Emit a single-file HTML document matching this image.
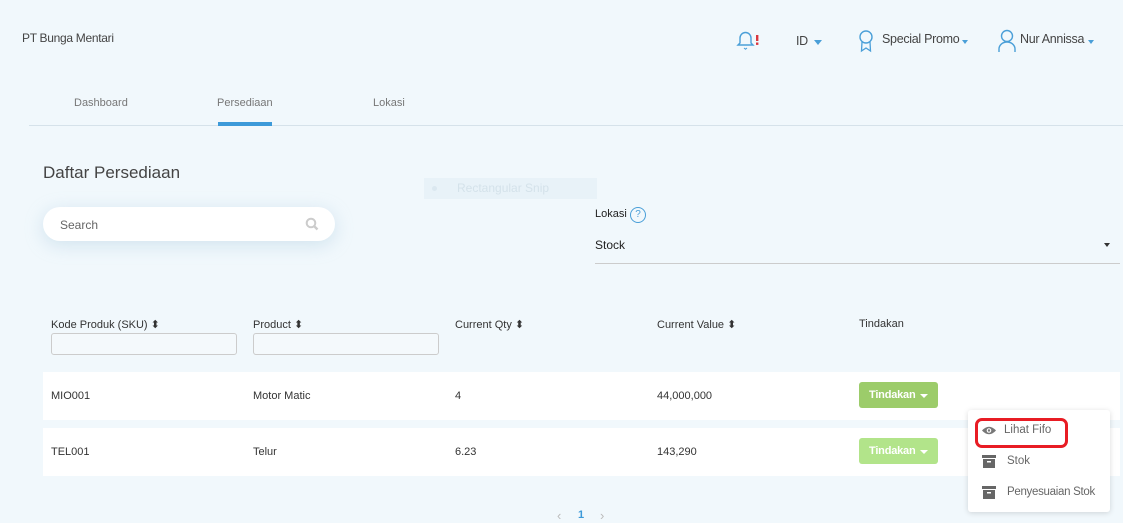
<!DOCTYPE html>
<html><head><style>
*{margin:0;padding:0;box-sizing:border-box}
body{width:1123px;height:523px;overflow:hidden;background:#f1f8fc;font-family:"Liberation Sans",sans-serif;color:#333;position:relative;font-size:12px}
.a{position:absolute;white-space:nowrap}
.hd{font-size:12.5px;color:#444;letter-spacing:-0.3px}
.tab{font-size:11px;color:#777}
.th{font-size:11px;color:#333}
.inp{position:absolute;width:186px;height:22px;border:1px solid #ccc;border-radius:3px;background:#f4f9fc}
.row{position:absolute;left:43px;width:1077px;height:48px;background:#fff}
.td{font-size:11px;color:#333}
.btn{position:absolute;width:79px;height:26px;border-radius:3px;color:#fff;font-size:11px;font-weight:bold;line-height:26px;letter-spacing:-0.2px;padding-left:10px}
.car{position:absolute;border:4px solid transparent;border-top:4px solid #fff;border-bottom:0}
</style></head><body>
<div class="a hd" style="left:22px;top:31px;font-size:12px">PT Bunga Mentari</div>
<svg class="a" style="left:735px;top:30px" width="28" height="22" viewBox="0 0 28 22"><path d="M3 15 L5 13 V8 a5.5 5.5 0 0 1 11 0 V13 L18 15 Z" fill="none" stroke="#4a9fd8" stroke-width="1.4"/><path d="M9 18 l1.5 1.2 l1.5-1.2" fill="none" stroke="#4a9fd8" stroke-width="1"/><rect x="21" y="5" width="2.4" height="6" fill="#d9363e"/><rect x="21" y="12.5" width="2.4" height="2.4" fill="#d9363e"/></svg>
<div class="a hd" style="left:796px;top:34px">ID</div>
<div class="a" style="left:814px;top:40px;border:4px solid transparent;border-top:5px solid #4a9fd8;border-bottom:0"></div>
<svg class="a" style="left:857px;top:29px" width="18" height="24" viewBox="0 0 18 24"><circle cx="9" cy="8" r="6" fill="none" stroke="#4a9fd8" stroke-width="1.4"/><path d="M5 13 L4.5 22 L9 19 L13.5 22 L13 13" fill="none" stroke="#4a9fd8" stroke-width="1.3"/></svg>
<div class="a hd" style="left:882px;top:32px">Special Promo</div>
<div class="a" style="left:962px;top:40px;border:3px solid transparent;border-top:4px solid #4a9fd8;border-bottom:0"></div>
<svg class="a" style="left:997px;top:29px" width="20" height="24" viewBox="0 0 20 24"><circle cx="10" cy="7" r="5.5" fill="none" stroke="#4a9fd8" stroke-width="1.4"/><path d="M2 23 V20 a8 7 0 0 1 16 0 V23" fill="none" stroke="#4a9fd8" stroke-width="1.4"/></svg>
<div class="a hd" style="left:1020px;top:32px">Nur Annissa</div>
<div class="a" style="left:1088px;top:40px;border:3px solid transparent;border-top:4px solid #4a9fd8;border-bottom:0"></div>

<div class="a tab" style="left:74px;top:97px">Dashboard</div>
<div class="a tab" style="left:217px;top:97px">Persediaan</div>
<div class="a tab" style="left:373px;top:97px">Lokasi</div>
<div class="a" style="left:29px;top:125px;width:1094px;height:1px;background:#d6e2ea"></div>
<div class="a" style="left:218px;top:122px;width:54px;height:4px;background:#3d9ad9"></div>

<div class="a" style="left:43px;top:163px;font-size:17px;color:#444">Daftar Persediaan</div>
<div class="a" style="left:424px;top:178px;width:173px;height:21px;background:#e8f2f8"></div>
<div class="a" style="left:432px;top:186px;width:5px;height:5px;border-radius:50%;background:#dbe8f0"></div>
<div class="a" style="left:457px;top:181px;font-size:12px;color:#d4e2ea">Rectangular Snip</div>
<div class="a" style="left:43px;top:207px;width:292px;height:34px;border-radius:17px;background:#fff;box-shadow:0 4px 18px rgba(150,190,215,.35)"></div>
<div class="a" style="left:60px;top:218px;font-size:12px;color:#666">Search</div>
<svg class="a" style="left:305px;top:217px" width="14" height="14" viewBox="0 0 14 14"><circle cx="6" cy="6" r="4.3" fill="none" stroke="#ccc" stroke-width="2"/><path d="M9 9 L12.5 12.5" stroke="#ccc" stroke-width="2.4"/></svg>

<div class="a" style="left:595px;top:208px;font-size:11px;color:#222">Lokasi</div>
<div class="a" style="left:630px;top:207px;width:16px;height:16px;border:1px solid #4a9fd8;border-radius:50%;color:#4a9fd8;font-size:10px;text-align:center;line-height:14px">?</div>
<div class="a" style="left:595px;top:238px;font-size:12px;color:#222">Stock</div>
<div class="a" style="left:1104px;top:243px;border:3px solid transparent;border-top:4px solid #333;border-bottom:0"></div>
<div class="a" style="left:595px;top:263px;width:525px;height:1px;background:#ccc"></div>

<div class="a th" style="left:51px;top:318px">Kode Produk (SKU) ⬍</div>
<div class="a th" style="left:253px;top:318px">Product ⬍</div>
<div class="a th" style="left:455px;top:318px">Current Qty ⬍</div>
<div class="a th" style="left:657px;top:318px">Current Value ⬍</div>
<div class="a th" style="left:859px;top:318px">Tindakan</div>
<div class="inp" style="left:51px;top:333px"></div>
<div class="inp" style="left:253px;top:333px"></div>

<div class="row" style="top:372px"></div>
<div class="row" style="top:428px"></div>
<div class="a td" style="left:51px;top:390px">MIO001</div>
<div class="a td" style="left:253px;top:390px">Motor Matic</div>
<div class="a td" style="left:455px;top:390px">4</div>
<div class="a td" style="left:657px;top:390px">44,000,000</div>
<div class="btn" style="left:859px;top:382px;background:#9ccc6a">Tindakan</div>
<div class="car" style="left:920px;top:394px"></div>
<div class="a td" style="left:51px;top:446px">TEL001</div>
<div class="a td" style="left:253px;top:446px">Telur</div>
<div class="a td" style="left:455px;top:446px">6.23</div>
<div class="a td" style="left:657px;top:446px">143,290</div>
<div class="btn" style="left:859px;top:438px;background:#b2e48a">Tindakan</div>
<div class="car" style="left:920px;top:450px"></div>

<div class="a" style="left:968px;top:410px;width:142px;height:102px;background:#fff;border-radius:3px;box-shadow:0 1px 6px rgba(0,0,0,.15)"></div>
<div class="a" style="left:975px;top:418px;width:93px;height:30px;border:3px solid #e81c24;border-radius:7px"></div>
<svg class="a" style="left:981px;top:425px" width="16" height="11" viewBox="0 0 16 11"><path d="M1 5.5 Q8 -2 15 5.5 Q8 13 1 5.5Z" fill="#777"/><circle cx="8" cy="5.5" r="2.3" fill="#fff"/><circle cx="8" cy="5.5" r="1.2" fill="#777"/></svg>
<div class="a" style="left:1004px;top:424px;font-size:11.5px;color:#666">Lihat Fifo</div>
<svg class="a" style="left:982px;top:455px" width="14" height="13"><rect x="0" y="0" width="14" height="3" fill="#666"/><rect x="1" y="4" width="12" height="9" fill="#666"/><rect x="5" y="6" width="4" height="1.5" fill="#fff"/></svg>
<div class="a" style="left:1007px;top:455px;font-size:11.5px;color:#666">Stok</div>
<svg class="a" style="left:982px;top:486px" width="14" height="13"><rect x="0" y="0" width="14" height="3" fill="#666"/><rect x="1" y="4" width="12" height="9" fill="#666"/><rect x="5" y="6" width="4" height="1.5" fill="#fff"/></svg>
<div class="a" style="left:1007px;top:486px;font-size:11.5px;color:#666;letter-spacing:-0.3px">Penyesuaian Stok</div>

<div class="a" style="left:557px;top:508px;font-size:13px;color:#bbb">‹</div>
<div class="a" style="left:578px;top:509px;font-size:11px;font-weight:bold;color:#3d9ad9">1</div>
<div class="a" style="left:600px;top:508px;font-size:13px;color:#bbb">›</div>
</body></html>
